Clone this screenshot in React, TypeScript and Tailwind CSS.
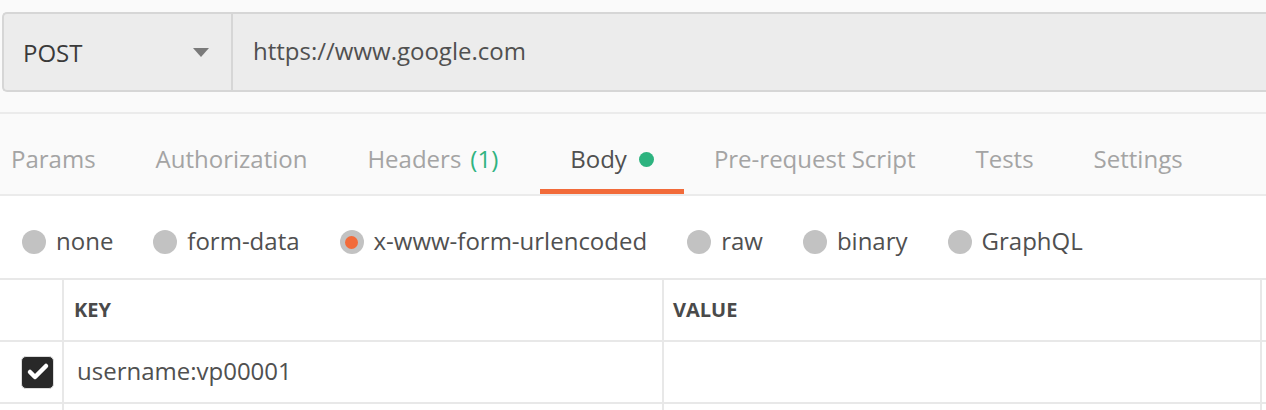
import { Check } from "lucide-react";

const tabs = [
  { label: "Params" },
  { label: "Authorization" },
  { label: "Headers", count: "(1)" },
  { label: "Body", active: true, dot: true },
  { label: "Pre-request Script" },
  { label: "Tests" },
  { label: "Settings" },
];

const bodyTypes = ["none", "form-data", "x-www-form-urlencoded", "raw", "binary", "GraphQL"];

export default function App() {
  return (
    <div className="h-[410px] w-[1266px] overflow-hidden bg-white font-['Open_Sans',sans-serif] text-[24px] text-[#505050]">
      {/* url bar */}
      <div className="bg-[#fafafa] pb-[20px] pl-[2px] pt-[12px]">
        <div className="flex h-[80px] rounded-l-[5px] border-y-2 border-l-2 border-[#d6d6d6] bg-[#ececec]">
          <div className="flex w-[229px] shrink-0 items-center justify-between border-r-2 border-[#d6d6d6] pl-[19px] pr-[22px]">
            <span className="pt-[2px] text-[#3a3a3a]">POST</span>
            <svg width="16" height="10" viewBox="0 0 16 10" className="mt-[2px]">
              <path d="M0 0 L16 0 L8 9 Z" fill="#7a7a7a" />
            </svg>
          </div>
          <div className="flex items-center pl-[20px] pb-[2px]">https://www.google.com</div>
        </div>
      </div>

      {/* tabs */}
      <div className="flex h-[84px] border-y-2 border-[#ebebeb] bg-[#fafafa]">
        <div className="ml-[-19px] flex">
          {tabs.map((t) => (
            <div
              key={t.label}
              className={
                "flex items-center border-b-[5px] pl-[30px] pt-[14px] " +
                (t.count ? "pr-[42px] " : "pr-[30px] ") +
                (t.active ? "border-[#f26b3a] text-[#505050]" : "border-transparent text-[#a4a4a4]")
              }
            >
              <span>{t.label}</span>
              {t.count && <span className="ml-[9px] text-[#2fb380]">{t.count}</span>}
              {t.dot && <span className="ml-[12px] mt-[2px] h-[15px] w-[15px] rounded-full bg-[#2db37f]" />}
            </div>
          ))}
        </div>
      </div>

      {/* body type */}
      <div className="flex h-[82px] items-center gap-[40px] pl-[22px] pt-[10px]">
        {bodyTypes.map((b) => (
          <div key={b} className="flex items-center gap-[10px]">
            <span className="flex h-[24px] w-[24px] items-center justify-center rounded-full bg-[#c2c2c2]">
              {b === "x-www-form-urlencoded" && <span className="h-[13px] w-[13px] rounded-full bg-[#f26b3a]" />}
            </span>
            <span className="pb-[2px]">{b}</span>
          </div>
        ))}
      </div>

      {/* table */}
      <div className="grid grid-cols-[64px_600px_598px_4px] border-t-2 border-[#e8e8e8]">
        <div className="h-[62px] border-b-2 border-r-2 border-[#e8e8e8]" />
        <div className="flex h-[62px] items-center border-b-2 border-r-2 border-[#e8e8e8] pl-[10px] text-[20px] font-bold text-[#4a4a4a]">
          KEY
        </div>
        <div className="flex h-[62px] items-center border-b-2 border-r-2 border-[#e8e8e8] pl-[9px] text-[20px] font-bold text-[#4a4a4a]">
          VALUE
        </div>
        <div className="h-[62px] border-b-2 border-[#e8e8e8]" />

        <div className="flex h-[62px] items-center border-b-2 border-r-2 border-[#e8e8e8] pl-[21px]">
          <span className="flex h-[33px] w-[33px] items-center justify-center rounded-[5px] border border-[#dcdcdc] bg-[#282828]">
            <Check size={24} strokeWidth={4.5} color="#ffffff" />
          </span>
        </div>
        <div className="flex h-[62px] items-center border-b-2 border-r-2 border-[#e8e8e8] pl-[13px] pb-[2px]">
          username:vp00001
        </div>
        <div className="h-[62px] border-b-2 border-r-2 border-[#e8e8e8]" />
        <div className="h-[62px] border-b-2 border-[#e8e8e8]" />

        <div className="h-[20px] border-r-2 border-[#e8e8e8]" />
        <div className="h-[20px] border-r-2 border-[#e8e8e8]" />
        <div className="h-[20px] border-r-2 border-[#e8e8e8]" />
        <div className="h-[20px]" />
      </div>
    </div>
  );
}
